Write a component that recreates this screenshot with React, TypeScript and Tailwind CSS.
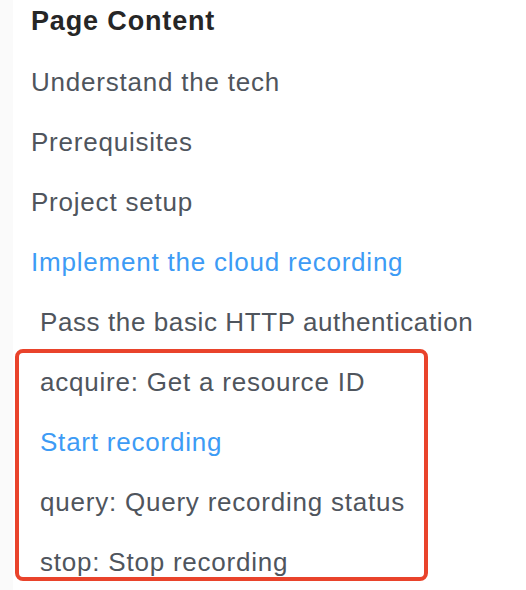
import React from "react";

const mainItems = [
  { label: "Understand the tech", active: false },
  { label: "Prerequisites", active: false },
  { label: "Project setup", active: false },
  { label: "Implement the cloud recording", active: true },
];

const subItems = [
  { label: "acquire: Get a resource ID", active: false },
  { label: "Start recording", active: true },
  { label: "query: Query recording status", active: false },
  { label: "stop: Stop recording", active: false },
];

export default function App() {
  return (
    <div
      className="flex w-[526px] h-[590px] overflow-hidden bg-white"
      style={{ fontFamily: '"Liberation Sans", Arial, sans-serif' }}
    >
      <div className="w-[13px] shrink-0 bg-[#fafafa]" />
      <div className="flex-1 pl-[18px]">
        <div className="h-[42px] flex items-center text-[27px] font-bold tracking-[0.85px] text-[#262626]">
          Page Content
        </div>
        <ul className="mt-[10px]">
          {mainItems.map((item) => (
            <li
              key={item.label}
              className={`h-[60px] flex items-center text-[26px] tracking-[0.78px] ${
                item.active ? "text-[#3d9bf5]" : "text-[#4f555d]"
              }`}
            >
              {item.label}
            </li>
          ))}
          <li className="h-[60px] flex items-center pl-[9px] text-[26px] tracking-[0.6px] text-[#4f555d]">
            Pass the basic HTTP authentication
          </li>
          <li className="relative">
            <ul>
              {subItems.map((item) => (
                <li
                  key={item.label}
                  className={`h-[60px] flex items-center pl-[9px] text-[26px] tracking-[0.78px] ${
                    item.active ? "text-[#3d9bf5]" : "text-[#4f555d]"
                  }`}
                >
                  {item.label}
                </li>
              ))}
            </ul>
            <div className="absolute left-[-16px] top-[-3px] w-[413px] h-[232px] border-4 border-[#e9432b] rounded-[8px] pointer-events-none" />
          </li>
        </ul>
      </div>
    </div>
  );
}
